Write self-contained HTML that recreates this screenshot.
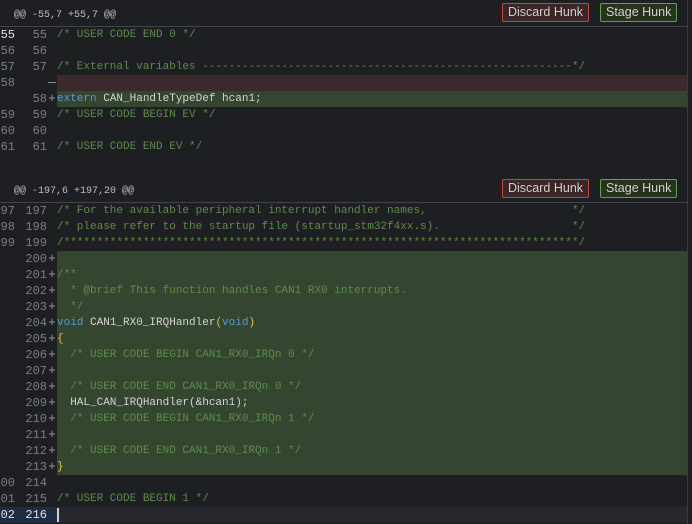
<!DOCTYPE html><html><head><style>
body{margin:0;width:692px;height:524px;background:#1e1f22;overflow:hidden;font-family:"Liberation Mono",monospace;font-size:11px;color:#bcbec4;position:relative}
.r{position:absolute;left:0;width:687px;height:16px;line-height:16px}
.o{position:absolute;left:-30px;width:45px;text-align:right;color:#7a7e85;font-size:12px}
.n{position:absolute;left:0;width:47px;text-align:right;color:#7a7e85;font-size:12px}
.p{position:absolute;left:47px;width:10px;text-align:center;color:#9a9a9a;font-size:13px}
.c{position:absolute;left:57px;right:0;white-space:pre;padding-left:0}
.a .c{background:#34462f}
.d .c{background:#3a2a2b}
.cm{color:#5f8c4a}.kw{color:#569cd6}.y{color:#e8c04a}.w{color:#d4d4d4}
.h{position:absolute;left:14px;font-size:10px;color:#bcbec4;font-family:"Liberation Mono",monospace}
.sep{position:absolute;left:0;width:687px;height:1px;background:#43454a}
.btn{position:absolute;height:17px;line-height:17px;font-family:"Liberation Sans",sans-serif;font-size:12.5px;padding:0 5px;color:#d0d0d0;border-radius:2px}
.dis{border:1px solid #c9473d;background:#3a2527}
.stg{border:1px solid #5ea352;background:#27321f}
.vl{position:absolute;left:687px;top:0;width:1px;height:524px;background:#393b40}
</style></head><body>
<div class="vl"></div>
<div class="h" style="top:10px">@@ -55,7 +55,7 @@</div>
<div class="btn dis" style="left:502px;top:3px">Discard Hunk</div>
<div class="btn stg" style="left:600px;top:3px">Stage Hunk</div>
<div class="sep" style="top:26px"></div>
<div class="r" style="top:27px"><span class="o" style="color:#dfe1e5">55</span><span class="n">55</span><span class="c cm">/* USER CODE END 0 */</span></div>
<div class="r" style="top:43px"><span class="o">56</span><span class="n">56</span></div>
<div class="r" style="top:59px"><span class="o">57</span><span class="n">57</span><span class="c cm">/* External variables --------------------------------------------------------*/</span></div>
<div class="r d" style="top:75px"><span class="o">58</span><span class="p">—</span><span class="c"> </span></div>
<div class="r a" style="top:91px"><span class="n">58</span><span class="p">+</span><span class="c"><span class="kw">extern</span> <span class="w">CAN_HandleTypeDef hcan1;</span></span></div>
<div class="r" style="top:107px"><span class="o">59</span><span class="n">59</span><span class="c cm">/* USER CODE BEGIN EV */</span></div>
<div class="r" style="top:123px"><span class="o">60</span><span class="n">60</span></div>
<div class="r" style="top:139px"><span class="o">61</span><span class="n">61</span><span class="c cm">/* USER CODE END EV */</span></div>
<div class="h" style="top:186px">@@ -197,6 +197,20 @@</div>
<div class="btn dis" style="left:502px;top:179px">Discard Hunk</div>
<div class="btn stg" style="left:600px;top:179px">Stage Hunk</div>
<div class="sep" style="top:202px"></div>
<div class="r" style="top:203px"><span class="o">197</span><span class="n">197</span><span class="c cm">/* For the available peripheral interrupt handler names,                      */</span></div>
<div class="r" style="top:219px"><span class="o">198</span><span class="n">198</span><span class="c cm">/* please refer to the startup file (startup_stm32f4xx.s).                    */</span></div>
<div class="r" style="top:235px"><span class="o">199</span><span class="n">199</span><span class="c cm">/******************************************************************************/</span></div>
<div class="r a" style="top:251px"><span class="n">200</span><span class="p">+</span><span class="c"> </span></div>
<div class="r a" style="top:267px"><span class="n">201</span><span class="p">+</span><span class="c cm">/**</span></div>
<div class="r a" style="top:283px"><span class="n">202</span><span class="p">+</span><span class="c cm">  * @brief This function handles CAN1 RX0 interrupts.</span></div>
<div class="r a" style="top:299px"><span class="n">203</span><span class="p">+</span><span class="c cm">  */</span></div>
<div class="r a" style="top:315px"><span class="n">204</span><span class="p">+</span><span class="c"><span class="kw">void</span> <span class="w">CAN1_RX0_IRQHandler</span><span class="y">(</span><span class="kw">void</span><span class="y">)</span></span></div>
<div class="r a" style="top:331px"><span class="n">205</span><span class="p">+</span><span class="c y">{</span></div>
<div class="r a" style="top:347px"><span class="n">206</span><span class="p">+</span><span class="c cm">  /* USER CODE BEGIN CAN1_RX0_IRQn 0 */</span></div>
<div class="r a" style="top:363px"><span class="n">207</span><span class="p">+</span><span class="c"> </span></div>
<div class="r a" style="top:379px"><span class="n">208</span><span class="p">+</span><span class="c cm">  /* USER CODE END CAN1_RX0_IRQn 0 */</span></div>
<div class="r a" style="top:395px"><span class="n">209</span><span class="p">+</span><span class="c w">  HAL_CAN_IRQHandler(&amp;hcan1);</span></div>
<div class="r a" style="top:411px"><span class="n">210</span><span class="p">+</span><span class="c cm">  /* USER CODE BEGIN CAN1_RX0_IRQn 1 */</span></div>
<div class="r a" style="top:427px"><span class="n">211</span><span class="p">+</span><span class="c"> </span></div>
<div class="r a" style="top:443px"><span class="n">212</span><span class="p">+</span><span class="c cm">  /* USER CODE END CAN1_RX0_IRQn 1 */</span></div>
<div class="r a" style="top:459px"><span class="n">213</span><span class="p">+</span><span class="c y">}</span></div>
<div class="r" style="top:475px"><span class="o">200</span><span class="n">214</span></div>
<div class="r" style="top:491px"><span class="o">201</span><span class="n">215</span><span class="c cm">/* USER CODE BEGIN 1 */</span></div>
<div class="r" style="top:507px;background:#26282e"><span style="position:absolute;left:0;width:57px;height:16px;background:#1f2b42"></span><span class="o" style="color:#dfe1e5">202</span><span class="n" style="color:#dfe1e5">216</span><span style="position:absolute;left:57px;top:1px;width:2px;height:14px;background:#ced0d6"></span></div>
</body></html>
